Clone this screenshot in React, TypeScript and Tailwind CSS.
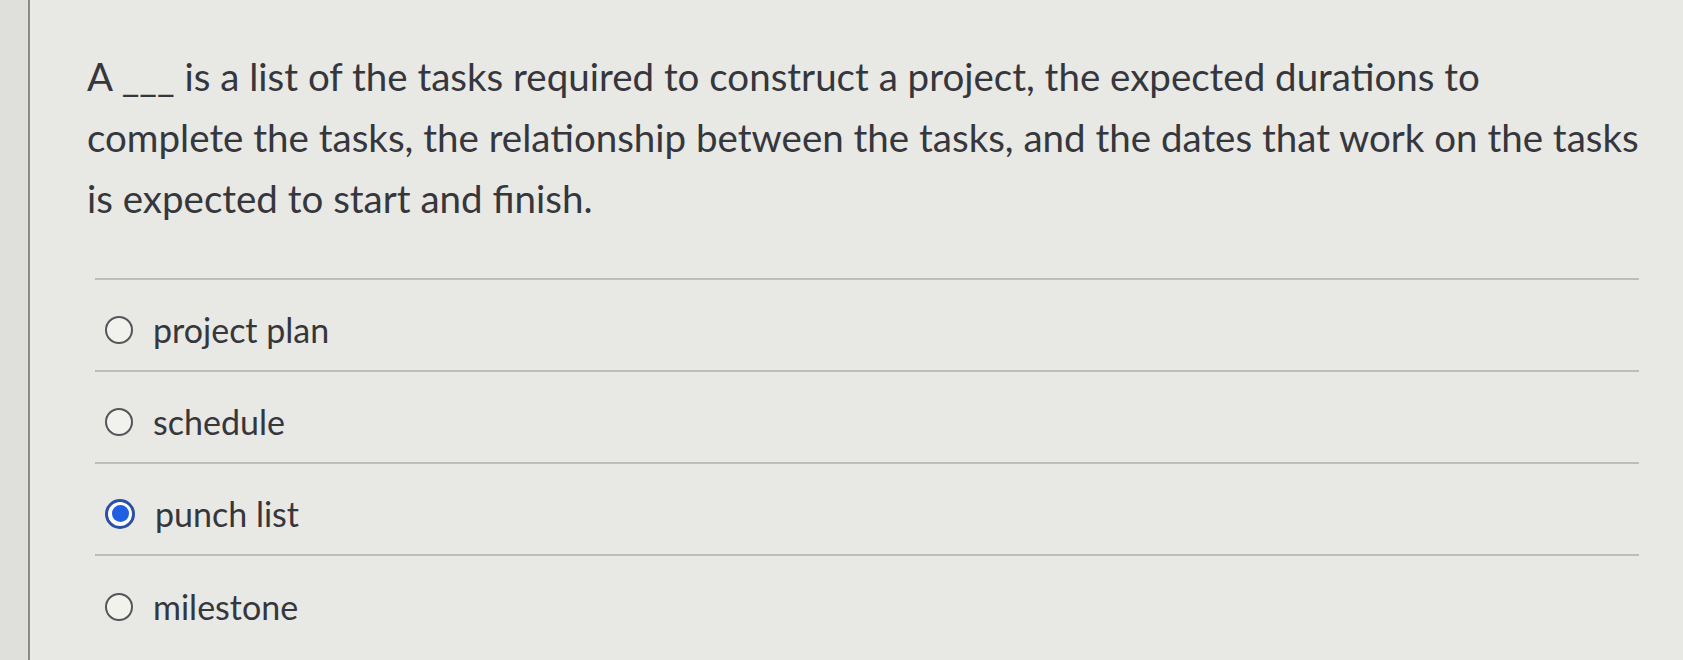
import { useState, type FC } from 'react';

const options = ['project plan', 'schedule', 'punch list', 'milestone'];

const Radio: FC<{ checked: boolean }> = ({ checked }) =>
  checked ? (
    <span className="flex h-[30px] w-[30px] items-center justify-center rounded-full border-[3px] border-[#2a4fa8] bg-white">
      <span className="h-[17px] w-[17px] rounded-full bg-[#1f5fe0]" />
    </span>
  ) : (
    <span className="h-[28px] w-[28px] rounded-full border-[2.5px] border-[#55555a] bg-[#f1f1ee]" />
  );

const App: FC = () => {
  const [selected, setSelected] = useState(2);

  return (
    <div
      className="flex h-[660px] w-[1683px] overflow-hidden bg-[#e8e8e4] text-[#36363d]"
      style={{ fontFamily: 'Lato, "Open Sans", sans-serif' }}
    >
      {/* left gutter */}
      <div className="w-[30px] shrink-0 border-r-2 border-[#8a8a8c] bg-[#dfdfdb]" />

      <div className="flex-1 pl-[57px] pr-[46px] pt-[46px]">
        <p className="whitespace-nowrap text-[38.5px] leading-[61px]">
          A ___ is a list of the tasks required to construct a project, the expected durations to
          <br />
          complete the tasks, the relationship between the tasks, and the dates that work on the tasks
          <br />
          is expected to start and finish.
        </p>

        <div className="ml-[8px] mt-[49px] border-t-2 border-[#bdbdbb]">
          {options.map((opt, i) => (
            <label
              key={opt}
              onClick={() => setSelected(i)}
              className="flex h-[92px] cursor-pointer items-center gap-[20px] border-b-2 border-[#bdbdbb] pl-[10px] pt-[9px] last:border-b-0"
            >
              <Radio checked={selected === i} />
              <span className="text-[34px]">{opt}</span>
            </label>
          ))}
        </div>
      </div>
    </div>
  );
};

export default App;
